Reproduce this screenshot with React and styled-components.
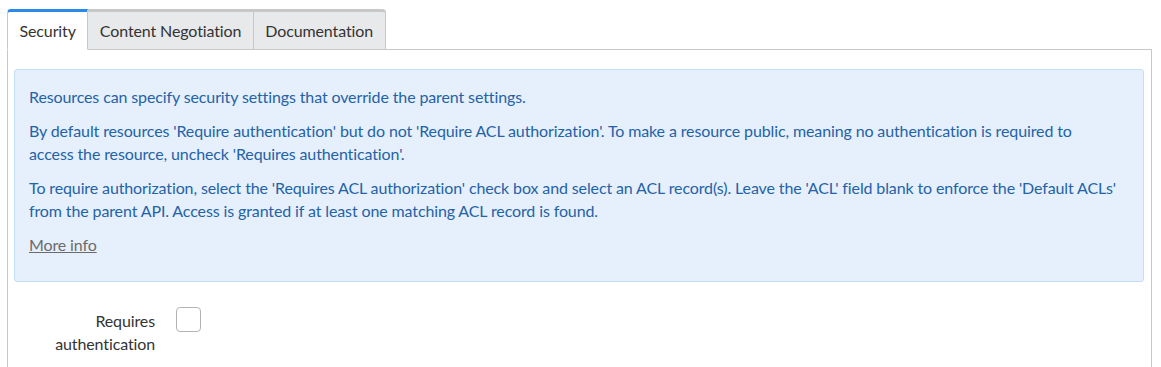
import React, { useState } from 'react'
import styled, { createGlobalStyle } from 'styled-components'

const GlobalStyle = createGlobalStyle`
  html, body {
    margin: 0;
    padding: 0;
    background: #ffffff;
    overflow: hidden;
  }
  body {
    font-family: Lato, "Liberation Sans", sans-serif;
    font-size: 16px;
    letter-spacing: -0.12px;
    color: #333333;
  }
`

const tabs = ['Security', 'Content Negotiation', 'Documentation']

const Page = styled.div`
  padding: 9px 9px 0 7px;
`

const TabBar = styled.div`
  display: flex;
  align-items: flex-end;
`

const Tab = styled.button`
  font: inherit;
  font-size: 16px;
  letter-spacing: -0.12px;
  color: #333;
  height: 41px;
  padding: 0 11.5px;
  margin: 0 0 -1px 0;
  cursor: pointer;
  border: 1px solid #c8c8c8;
  border-left-width: ${p => (p.first ? '1px' : '0')};
  border-top: 3px solid ${p => (p.active ? '#2b8ae8' : '#c8c8c8')};
  border-bottom: 1px solid ${p => (p.active ? '#ffffff' : '#c8c8c8')};
  background: ${p => (p.active ? '#ffffff' : '#e8e9eb')};
  border-top-left-radius: ${p => (p.first ? '4px' : '0')};
  border-top-right-radius: ${p => (p.last ? '4px' : '0')};
  position: relative;
  z-index: ${p => (p.active ? 1 : 0)};
`

const Panel = styled.div`
  border: 1px solid #c8c8c8;
  border-bottom: 0;
  padding: 19px 7px 0 6px;
  height: 310px;
`

const Notice = styled.div`
  background: #e6f0fc;
  border: 1px solid #c6ddf6;
  border-radius: 3px;
  padding: 15px 14px 14px;
  color: #2462a7;
  line-height: 23px;

  p {
    margin: 0 0 11px;
  }
`

const MoreInfo = styled.a`
  color: #6b6b6b;
  text-decoration: underline;
  cursor: pointer;
`

const FieldRow = styled.div`
  display: flex;
  align-items: flex-start;
  margin-top: 25px;
`

const FieldLabel = styled.label`
  width: 141px;
  text-align: right;
  line-height: 23px;
  padding-top: 2px;
  color: #333;
`

const Checkbox = styled.span`
  display: inline-block;
  width: 23px;
  height: 23px;
  margin-left: 21px;
  border: 1px solid #b4b4b4;
  border-radius: 4px;
  background: #fff;
  cursor: pointer;
`

export default function App() {
  const [active, setActive] = useState(0)
  const [checked, setChecked] = useState(false)

  return (
    <>
      <GlobalStyle />
      <Page>
        <TabBar>
          {tabs.map((t, i) => (
            <Tab
              key={t}
              active={i === active}
              first={i === 0}
              last={i === tabs.length - 1}
              onClick={() => setActive(i)}
            >
              {t}
            </Tab>
          ))}
        </TabBar>
        <Panel>
          <Notice>
            <p>Resources can specify security settings that override the parent settings.</p>
            <p>
              By default resources 'Require authentication' but do not 'Require ACL authorization'. To make a
              resource public, meaning no authentication is required to
              <br />
              access the resource, uncheck 'Requires authentication'.
            </p>
            <p>
              To require authorization, select the 'Requires ACL authorization' check box and select an ACL
              record(s). Leave the 'ACL' field blank to enforce the 'Default ACLs' from the parent API. Access is
              granted if at least one matching ACL record is found.
            </p>
            <p>
              <MoreInfo>More info</MoreInfo>
            </p>
          </Notice>
          <FieldRow>
            <FieldLabel>Requires authentication</FieldLabel>
            <Checkbox onClick={() => setChecked(!checked)} />
          </FieldRow>
        </Panel>
      </Page>
    </>
  )
}
